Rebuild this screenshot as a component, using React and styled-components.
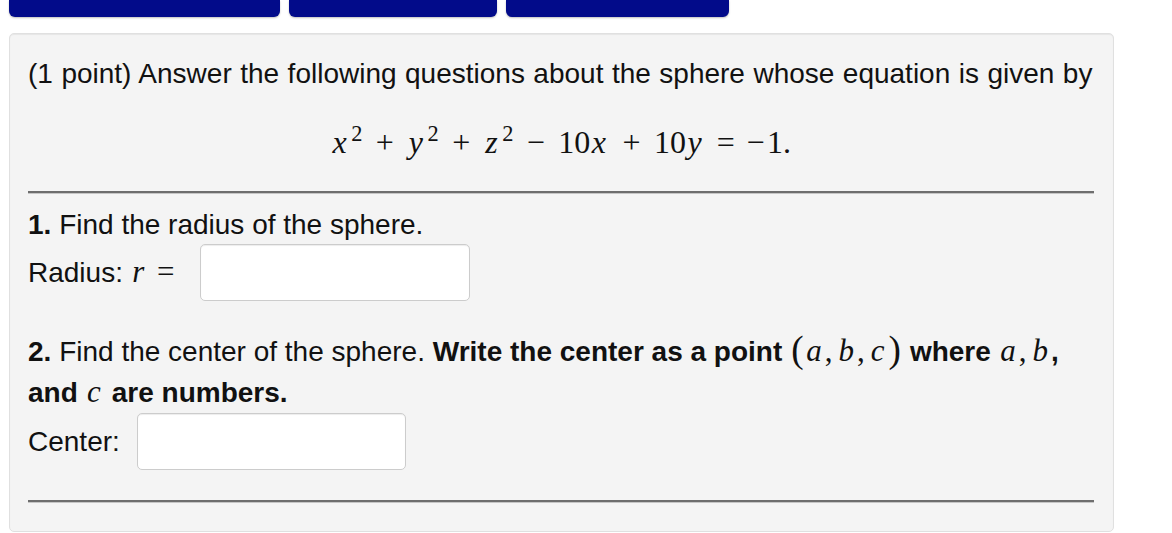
import React from "react";
import styled, { createGlobalStyle } from "styled-components";

const Global = createGlobalStyle`
  html, body { margin: 0; padding: 0; background: #ffffff; }
  body { font-family: "Liberation Sans", Arial, sans-serif; color: #111; }
`;

const TopBar = styled.div`
  display: flex;
  gap: 9px;
  padding-left: 9px;
  height: 17px;
`;

const TabButton = styled.div`
  width: ${(p) => p.$w}px;
  height: 17px;
  background: #020b8a;
  border-radius: 0 0 6px 6px;
  box-shadow: 0 1px 2px rgba(0, 0, 0, 0.25);
`;

const Panel = styled.div`
  margin: 16px 0 0 9px;
  width: 1105px;
  box-sizing: border-box;
  background: #f4f4f4;
  border: 1px solid #e0e0e0;
  border-radius: 5px;
  box-shadow: inset 0 1px 1px rgba(0, 0, 0, 0.06);
  padding: 19px 19px 28px 18px;
  font-size: 28px;
  line-height: 41px;
`;

const Para = styled.div`
  margin: 0;
  word-spacing: 0.7px;
`;

const Equation = styled.div`
  font-family: "Liberation Serif", "Times New Roman", serif;
  font-size: 32px;
  line-height: 41px;
  text-align: center;
  margin: 28px 0 28px;
`;

const MathSpan = styled.span`
  font-family: "Liberation Serif", "Times New Roman", serif;
  font-size: 31px;
  line-height: 1;
  font-weight: 400;
`;

const Var = styled.i`
  font-style: italic;
  font-family: "Liberation Serif", "Times New Roman", serif;
  font-weight: 400;
  margin: 0 ${(p) => p.$ic ?? 0.1}em 0 0.05em;
`;

const Sup = styled.sup`
  font-size: 0.7em;
  vertical-align: 0.55em;
  line-height: 0;
  margin-left: 0.06em;
`;

const Op = styled.span`
  display: inline-block;
  width: ${(p) => (p.$rel ? "1.3em" : "1.4em")};
  text-align: center;
`;

const Unary = styled.span`
  margin-right: 0.08em;
`;

const Comma = styled.span`
  margin-right: 0.14em;
`;

const Paren = styled.span`
  font-size: 1.2em;
  vertical-align: -0.04em;
  line-height: 0;
  margin: 0 0.03em;
`;

const Rule = styled.hr`
  height: 0;
  margin: 0;
  border: none;
  border-top: 2px solid #6e6e6e;
  border-bottom: 1px solid #c6c6c6;
`;

const Item = styled.div`
  margin-top: ${(p) => p.$top}px;
`;

const Row = styled.div`
  display: flex;
  align-items: center;
  margin-top: ${(p) => p.$top || 0}px;
  margin-bottom: ${(p) => p.$bottom || 0}px;
`;

const Label = styled.span`
  white-space: nowrap;
`;

const AnswerInput = styled.input`
  width: ${(p) => p.$w}px;
  height: 57px;
  box-sizing: border-box;
  margin: 0 0 0 ${(p) => p.$gap}px;
  background: #ffffff;
  border: 1.5px solid #cccccc;
  border-radius: 5px;
  box-shadow: inset 0 1px 1px rgba(0, 0, 0, 0.075);
  font-size: 24px;
  padding: 0 10px;
  outline: none;
`;

export default function App() {
  return (
    <>
      <Global />
      <TopBar>
        <TabButton $w={271} />
        <TabButton $w={208} />
        <TabButton $w={223} />
      </TopBar>
      <Panel>
        <Para>
          (1 point) Answer the following questions about the sphere whose equation is given by
        </Para>
        <Equation>
          <Var>x</Var>
          <Sup>2</Sup>
          <Op>+</Op>
          <Var>y</Var>
          <Sup>2</Sup>
          <Op>+</Op>
          <Var>z</Var>
          <Sup>2</Sup>
          <Op>−</Op>
          10<Var>x</Var>
          <Op>+</Op>
          10<Var>y</Var>
          <Op $rel>=</Op>
          <Unary>−</Unary>1.
        </Equation>
        <Rule />
        <Item $top={10}>
          <b>1.</b> Find the radius of the sphere.
        </Item>
        <Row $top={-1}>
          <Label>
            Radius:{" "}
            <MathSpan>
              <Var $ic={0.04}>r</Var>
              <Op $rel>=</Op>
            </MathSpan>
          </Label>
          <AnswerInput $w={270} $gap={14} aria-label="radius" />
        </Row>
        <Item $top={30}>
          <b>2.</b> Find the center of the sphere.{" "}
          <b>
            Write the center as a point{" "}
            <MathSpan>
              <Paren>(</Paren>
              <Var>a</Var>
              <Comma>,</Comma>
              <Var>b</Var>
              <Comma>,</Comma>
              <Var>c</Var>
              <Paren>)</Paren>
            </MathSpan>{" "}
            where{" "}
            <MathSpan>
              <Var>a</Var>
              <Comma>,</Comma>
              <Var>b</Var>
            </MathSpan>
            , and{" "}
            <MathSpan>
              <Var>c</Var>
            </MathSpan>{" "}
            are numbers.
          </b>
        </Item>
        <Row $bottom={30}>
          <Label>Center:</Label>
          <AnswerInput $w={269} $gap={17} aria-label="center" />
        </Row>
        <Rule />
      </Panel>
    </>
  );
}
